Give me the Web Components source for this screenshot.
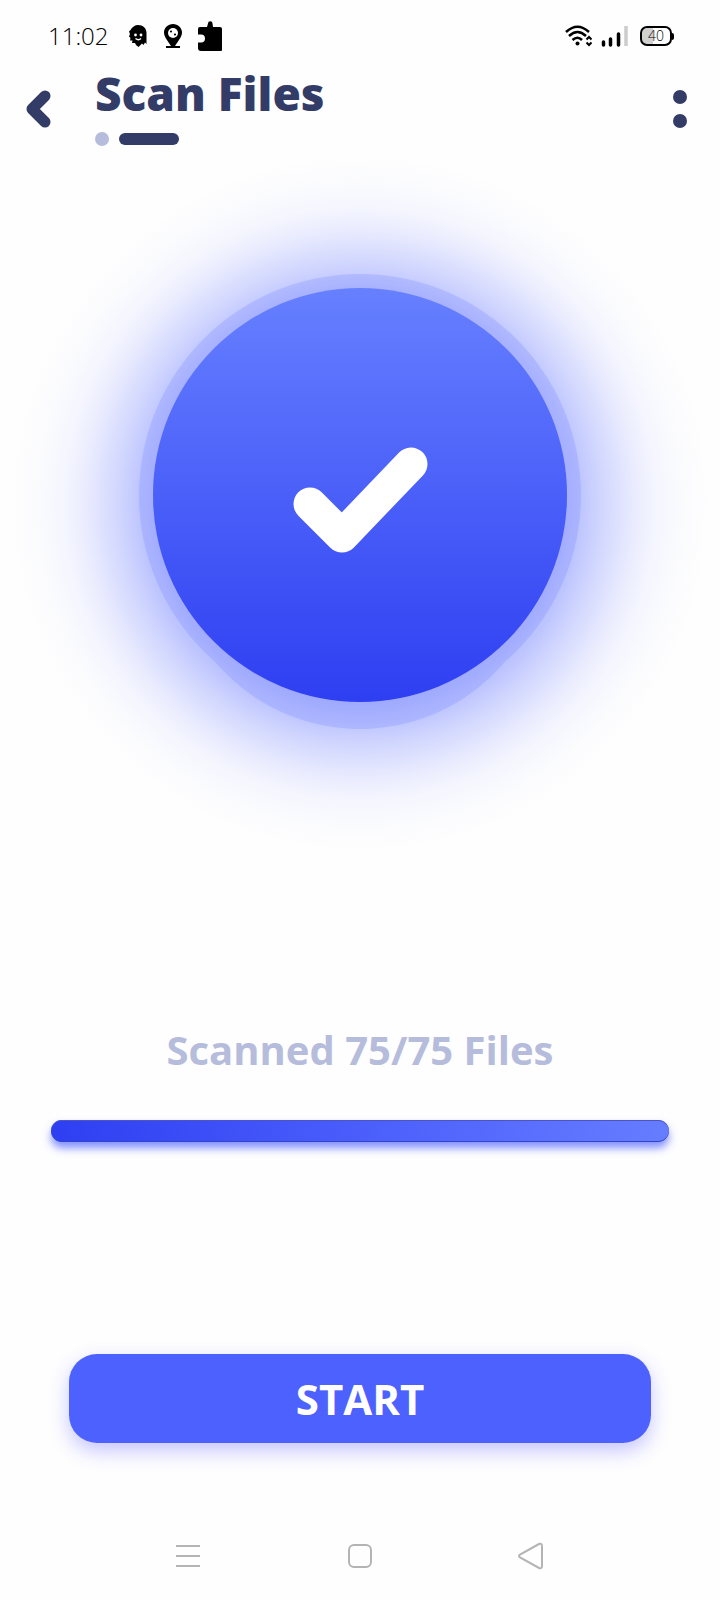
<!DOCTYPE html>
<html lang="en">
<head>
<meta charset="utf-8">
<meta name="viewport" content="width=device-width, initial-scale=1">
<title>Scan Files</title>
<style>
    body {
        margin: 0;
        background: #fefefe;
        font-family: 'Open Sans', 'Noto Sans', sans-serif;
        color: #333c67;
    }
</style>
</head>
<body>
<scan-screen></scan-screen>

<script>
(() => {
    // creates an open shadow root from a html string
    const define = (name, html, setup) => {
        const tmpl = document.createElement('template')
        tmpl.innerHTML = html
        customElements.define(name, class extends HTMLElement {
            constructor () {
                super()
                this.attachShadow({ mode: 'open' })
                this.shadowRoot.appendChild(tmpl.content.cloneNode(true))
            }
            connectedCallback () {
                if (setup) setup(this, this.shadowRoot)
            }
        })
    }

    // Phone status bar
    define('status-bar', `
        <style>
            :host {
                display: flex;
                align-items: center;
                justify-content: space-between;
                height: 72px;
                padding: 0 46px 0 48px;
                box-sizing: border-box;
                color: #000;
            }
            div { display: flex; align-items: center; }
            .left { gap: 15px; }
            .right { gap: 8px; }
            .time {
                font: 300 24px/32px 'Open Sans', sans-serif;
                margin-right: 4px;
            }
            .battery {
                font: 300 14px/16px 'Open Sans', sans-serif;
                width: 28px;
                border: 2px solid #000;
                border-radius: 7px;
                text-align: center;
                background: linear-gradient(90deg, #d0d0d0 40%, #fefefe 40%);
            }
            .cap { width: 2px; height: 7px; background: #000; border-radius: 0 2px 2px 0; }
            .level { margin-left: 3px; }
            svg { display: block; }
        </style>
        <div class="left">
            <span class="time">11:02</span>
            <svg width="20" height="24" viewBox="0 0 20 24">
                <path d="M10 1C15 1 18.500 4 18.500 9V20L17 18.500 15.500 21 14 19.500 10.500 23 8 21 7 19H4L4.500 16.500H2L2.500 14 1 12.500 2 10 1 7.500 2.500 6C4 3 7 1 10 1Z"/>
                <circle cx="7.500" cy="11" r="1.400" fill="#fff"/><circle cx="13" cy="11" r="1.400" fill="#fff"/>
                <path d="M7.500 14.500q3 2.500 5.500 0" fill="none" stroke="#fff" stroke-width="1.200"/>
            </svg>
            <svg width="20" height="24" viewBox="0 0 20 24">
                <path d="M10 0C5 0 1 4 1 8.500C1 13 5 17 8 22H3v2h14v-2h-5C15 17 19 13 19 8.500C19 4 15 0 10 0Z"/>
                <circle cx="10" cy="9" r="5" fill="#fff"/>
                <circle cx="8" cy="7.500" r="1.100"/><circle cx="12" cy="10.500" r="1.100"/>
            </svg>
            <svg width="24" height="30" viewBox="0 0 24 30">
                <path d="M2 6H9L10 2.500a2 2 0 0 1 4.500 0L15 6h7a2 2 0 0 1 2 2V29a1 1 0 0 1-1 1H3a3 3 0 0 1-3-3V21.500H3a4 4 0 0 0 0-8H0V8a2 2 0 0 1 2-2Z"/>
            </svg>
        </div>
        <div class="right">
            <svg width="28" height="22" viewBox="0 0 28 22">
                <g fill="none" stroke="#000" stroke-width="2.500">
                    <path d="M1 7Q12.500 -3.500 24 7"/><path d="M4 11Q12.500 3 21 11"/><path d="M7.500 15Q12.500 10.500 17 15"/>
                    <path d="M21.500 14.500l2.500-2.500 2.500 2.500M21.500 17.500l2.500 2.500 2.500-2.500" stroke-width="2"/>
                </g>
                <circle cx="12.500" cy="18.500" r="2"/>
            </svg>
            <svg width="28" height="22" viewBox="0 0 28 22">
                <path d="M2.500 17v3M9.500 14v6M17.500 9v11" stroke="#000" stroke-width="3.500" stroke-linecap="round"/>
                <path d="M25 1v20" stroke="#ccc" stroke-width="3.500"/>
            </svg>
            <div class="level"><span class="battery">40</span><span class="cap"></span></div>
        </div>
    `)

    // Title row with back and menu buttons
    define('page-header', `
        <style>
            :host {
                display: flex;
                align-items: center;
                height: 78px;
                padding: 0 24px;
            }
            button { border: 0; padding: 0; margin-bottom: 4px; background: none; cursor: pointer; }
            svg { display: block; }
            .title { flex: 1; margin-left: 43px; }
            h1 { margin: 0; font-size: 46px; line-height: 44px; font-weight: 800; }
            .steps { display: flex; align-items: center; gap: 10px; margin: 17px 0 6px; }
            .steps i { width: 14px; height: 14px; border-radius: 7px; background: #b6bcdb; }
            .steps .on { width: 60px; height: 12px; background: #333c67; }
        </style>
        <button aria-label="Back">
            <svg width="28" height="40" viewBox="0 0 28 40">
                <path d="M21 7L8 20 21 33" fill="none" stroke="#333c67" stroke-width="11" stroke-linecap="round" stroke-linejoin="round"/>
            </svg>
        </button>
        <div class="title">
            <h1><slot></slot></h1>
            <div class="steps"><i></i><i class="on"></i></div>
        </div>
        <button aria-label="Menu">
            <svg width="32" height="40" viewBox="0 0 32 40" fill="#333c67">
                <circle cx="16" cy="8" r="7"/><circle cx="16" cy="32" r="7"/>
            </svg>
        </button>
    `)

    // Round badge with glow and check mark
    define('scan-badge', `
        <style>
            :host { display: block; }
            svg { display: block; width: 100%; overflow: visible; }
        </style>
        <svg viewBox="0 0 720 700" role="img" aria-label="Scan complete">
            <defs>
                <linearGradient id="face" x1="0" y1="0" x2="0" y2="1">
                    <stop offset="0" stop-color="#6680ff"/>
                    <stop offset="1" stop-color="#2e3ff2"/>
                </linearGradient>
                <radialGradient id="glow" gradientUnits="userSpaceOnUse" cx="360" cy="354" r="350">
                    <stop offset="0.560" stop-color="#4d61ff" stop-opacity="0.450"/>
                    <stop offset="0.630" stop-color="#4d61ff" stop-opacity="0.360"/>
                    <stop offset="0.680" stop-color="#4d61ff" stop-opacity="0.270"/>
                    <stop offset="0.740" stop-color="#4d61ff" stop-opacity="0.180"/>
                    <stop offset="0.790" stop-color="#4d61ff" stop-opacity="0.110"/>
                    <stop offset="0.850" stop-color="#4d61ff" stop-opacity="0.052"/>
                    <stop offset="0.920" stop-color="#4d61ff" stop-opacity="0.018"/>
                    <stop offset="1" stop-color="#4d61ff" stop-opacity="0"/>
                </radialGradient>
            </defs>
            <circle cx="360" cy="354" r="350" fill="url(#glow)"/>
            <g fill="#4d61ff" opacity="0.160">
                <circle cx="360" cy="345" r="221"/>
                <circle cx="360" cy="389" r="190"/>
            </g>
            <circle cx="360" cy="345" r="207" fill="url(#face)"/>
            <path d="M310 354L342 386 411 314" fill="none" stroke="#fff" stroke-width="33" stroke-linecap="round" stroke-linejoin="round"/>
        </svg>
    `)

    // Label and progress bar, driven by the value / max attributes
    define('scan-progress', `
        <style>
            :host { display: block; padding: 0 51px; text-align: center; }
            label { display: block; font-size: 40px; line-height: 56px; font-weight: 700; color: #b6bcdb; }
            progress {
                display: block;
                width: 100%;
                height: 22px;
                margin-top: 42px;
                appearance: none;
                border: 0;
                border-radius: 11px;
                box-shadow: 0 6px 8px rgba(77, 97, 255, 0.700);
            }
            progress::-webkit-progress-bar { background: #e8eaff; border-radius: 11px; }
            progress::-webkit-progress-value {
                border-radius: 11px;
                background: linear-gradient(90deg, #2e3ff2, #4d61fc 55%, #667dff);
                box-shadow: inset 0 1px #4a55c8, inset 0 -1px #3444c8;
            }
        </style>
        <label for="bar"></label>
        <progress id="bar"></progress>
    `, (el, root) => {
        const value = el.getAttribute('value')
        const max = el.getAttribute('max')
        root.querySelector('label').textContent = `Scanned ${value}/${max} Files`
        root.querySelector('progress').max = max
        root.querySelector('progress').value = value
    })

    define('main-button', `
        <style>
            :host { display: block; padding: 0 69px; }
            button {
                display: block;
                width: 100%;
                height: 89px;
                border: 0;
                border-radius: 28px;
                background: #4d61ff;
                box-shadow: 0 8px 20px rgba(77, 77, 255, 0.320);
                color: #fff;
                font: 700 42px/56px 'Open Sans', sans-serif;
                cursor: pointer;
            }
        </style>
        <button><slot></slot></button>
    `)

    // System navigation keys
    define('nav-bar', `
        <style>
            :host { display: flex; justify-content: space-between; padding: 0 172px; }
            button { border: 0; padding: 0; background: none; }
            svg { display: block; fill: none; stroke: #b4b4b4; stroke-width: 2; }
        </style>
        <button aria-label="Recent apps"><svg width="32" height="32" viewBox="0 0 32 32"><path d="M4 6h24M4 16h24M4 26h24"/></svg></button>
        <button aria-label="Home"><svg width="32" height="32" viewBox="0 0 32 32"><rect x="5" y="5" width="22" height="22" rx="5"/></svg></button>
        <button aria-label="Back"><svg width="32" height="32" viewBox="0 0 32 32"><path d="M23 4L4 14.500Q2 16 4 17.500L23 28Q26 29 26 26V6Q26 3 23 4Z"/></svg></button>
    `)

    define('scan-screen', `
        <style>
            :host { display: flex; flex-direction: column; min-height: 100vh; }
            scan-progress { margin-top: 172px; }
            main-button { margin-top: 212px; }
            nav-bar { margin: auto 0 28px; }
        </style>
        <status-bar></status-bar>
        <page-header>Scan Files</page-header>
        <scan-badge></scan-badge>
        <scan-progress value="75" max="75"></scan-progress>
        <main-button>START</main-button>
        <nav-bar></nav-bar>
    `)
})()
</script>
</body>
</html>
